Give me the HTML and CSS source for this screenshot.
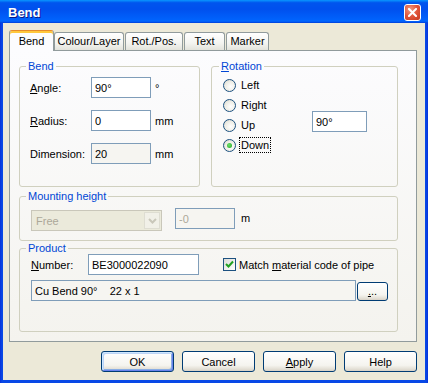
FILE: index.html
```html
<!DOCTYPE html>
<html lang="en">
<head>
    <meta charset="UTF-8">
    <title>Bend</title>
    <link rel="stylesheet" href="styles.css">
</head>
<body>
    <div class="window">
        <div class="titlebar">
            <span class="title">Bend</span>
            <span class="close-btn">
                <svg width="9" height="9" viewBox="0 0 9 9"><path d="M1 1 L8 8 M8 1 L1 8" stroke="#fff" stroke-width="2" stroke-linecap="square"/></svg>
            </span>
        </div>
        <div class="client">
            <div class="tabs">
                <span class="tab active tab-bend">Bend</span>
                <span class="tab tab-colour">Colour/Layer</span>
                <span class="tab tab-rot">Rot./Pos.</span>
                <span class="tab tab-text">Text</span>
                <span class="tab tab-marker">Marker</span>
            </div>
            <div class="panel">
                <div class="row-top">
                    <fieldset class="group group-bend">
                        <legend>Bend</legend>
                        <div class="field-grid">
                            <label><u>A</u>ngle:</label>
                            <input class="edit" type="text" value="90°">
                            <span class="unit">°</span>
                            <label><u>R</u>adius:</label>
                            <input class="edit" type="text" value="0">
                            <span class="unit">mm</span>
                            <label>Dimension:</label>
                            <input class="edit readonly" type="text" value="20" readonly>
                            <span class="unit">mm</span>
                        </div>
                    </fieldset>
                    <fieldset class="group group-rotation">
                        <legend><u>R</u>otation</legend>
                        <div class="rotation-body">
                            <div class="radio-list">
                                <div class="radio-row"><span class="radio"></span><span class="radio-text">Left</span></div>
                                <div class="radio-row"><span class="radio"></span><span class="radio-text">Right</span></div>
                                <div class="radio-row"><span class="radio"></span><span class="radio-text">Up</span></div>
                                <div class="radio-row"><span class="radio checked"></span><span class="radio-text focused">Down</span></div>
                            </div>
                            <input class="edit rotation-angle" type="text" value="90°">
                        </div>
                    </fieldset>
                </div>
                <fieldset class="group group-mount">
                    <legend>Mounting height</legend>
                    <div class="mount-row">
                        <div class="select disabled">
                            <span class="select-text">Free</span>
                            <span class="select-arrow">
                                <svg width="9" height="6" viewBox="0 0 9 6"><path d="M1 1 L4.5 4.5 L8 1" stroke="#C9C7BA" stroke-width="2" fill="none"/></svg>
                            </span>
                        </div>
                        <input class="edit readonly dim mount-value" type="text" value="-0" readonly>
                        <span class="mount-unit">m</span>
                    </div>
                </fieldset>
                <fieldset class="group group-product">
                    <legend>Product</legend>
                    <div class="product-row">
                        <label class="product-label"><u>N</u>umber:</label>
                        <input class="edit product-number" type="text" value="BE3000022090">
                        <span class="checkbox">
                            <svg width="9" height="9" viewBox="0 0 9 9"><path d="M1 4 L3.5 6.5 L8 1.5" stroke="#21A121" stroke-width="2" fill="none"/></svg>
                        </span>
                        <span class="check-text">Match <u>m</u>aterial code of pipe</span>
                    </div>
                    <div class="product-row second">
                        <input class="edit readonly product-desc" type="text" value="Cu Bend 90°    22 x 1" readonly>
                        <button class="xp-btn browse-btn"><u>.</u>..</button>
                    </div>
                </fieldset>
            </div>
            <div class="buttons">
                <button class="xp-btn default">OK</button>
                <button class="xp-btn">Cancel</button>
                <button class="xp-btn"><u>A</u>pply</button>
                <button class="xp-btn">Help</button>
            </div>
        </div>
    </div>
</body>
</html>
```

FILE: styles.css
```css
body {
    margin: 0;
    font-family: "Liberation Sans", Arial, sans-serif;
    font-size: 11px;
    color: #000;
}

.window {
    width: 428px;
    height: 383px;
    display: flex;
    flex-direction: column;
    background: linear-gradient(90deg, #0831D9, #0848E6 2px, #0848E6 calc(100% - 2px), #0831D9);
    box-sizing: border-box;
}

.titlebar {
    height: 23px;
    flex: none;
    display: flex;
    align-items: center;
    justify-content: space-between;
    padding: 2px 7px 0 8px;
    box-sizing: border-box;
    background: linear-gradient(#0997FF 0%, #0055EE 12%, #0050EE 40%, #0062FC 85%, #0066FF 92%, #003DD7 100%);
}

.title {
    color: #fff;
    font-weight: bold;
    font-size: 13px;
    text-shadow: 1px 1px #0A1883;
}

.close-btn {
    width: 15px;
    height: 15px;
    border: 1px solid #fff;
    border-radius: 3px;
    background: radial-gradient(circle at 35% 30%, #F29A7F, #E0553A 50%, #C63A1F);
    display: flex;
    align-items: center;
    justify-content: center;
}

.client {
    flex: 1;
    margin: 0 3px 3px;
    background: #ECE9D8;
    padding: 7px 8px 0 6px;
}

/* tabs */
.tabs {
    height: 20px;
    display: flex;
    align-items: flex-end;
}

.tab {
    height: 18px;
    box-sizing: border-box;
    border: 1px solid #919B9C;
    border-bottom: none;
    border-radius: 3px 3px 0 0;
    background: linear-gradient(#FFFFFF, #F4F4F0 60%, #E3E3DB);
    text-align: center;
    line-height: 17px;
}

.tab.active {
    height: 21px;
    margin-bottom: -1px;
    position: relative;
    z-index: 1;
    background: #FCFCFE;
    border-top-color: #E68B2C;
    box-shadow: inset 0 2px #FFC83C;
    padding-top: 2px;
    line-height: 16px;
}

.tab-bend { width: 45px; }
.tab-colour { width: 70px; }
.tab-rot { width: 58px; margin-left: 1px; }
.tab-text { width: 41px; margin-left: 1px; }
.tab-marker { width: 43px; margin-left: 1px; }

.panel {
    height: 292px;
    box-sizing: border-box;
    border: 1px solid #919B9C;
    background: linear-gradient(#FCFCFE, #F4F3EE);
    padding: 9px 18px 0 9px;
}

/* group boxes */
.row-top {
    display: flex;
    gap: 11px;
}

.group {
    margin: 0;
    min-width: 0;
    box-sizing: border-box;
    border: 1px solid #D0D0BF;
    border-radius: 3px;
    padding: 0;
}

.group legend {
    color: #0046D5;
    line-height: 13px;
    padding: 0 2px;
    margin-left: -4px;
}

.group-bend {
    width: 181px;
    height: 127px;
    padding: 4px 0 0 10px;
}

.group-rotation {
    width: 187px;
    height: 127px;
    padding: 2px 0 0 11px;
}

.group-mount {
    margin-top: 3px;
    height: 51px;
    padding: 5px 0 0 11px;
}

.group-mount legend,
.group-product legend {
    margin-left: -5px;
}

.group-product {
    margin-top: 1px;
    height: 90px;
    padding: 0 0 0 11px;
}

/* edits */
.edit {
    height: 21px;
    box-sizing: border-box;
    border: 1px solid #7F9DB9;
    padding: 0 3px;
    margin: 0;
    font: inherit;
    color: #000;
    background: #fff;
    outline: none;
}

.edit.readonly {
    background: #F6F5F1;
}

.edit.dim {
    color: #ACA899;
}

.field-grid {
    display: grid;
    grid-template-columns: 61px 60px auto;
    row-gap: 12px;
    align-items: center;
}

.field-grid .edit {
    width: 60px;
}

.unit {
    margin-left: 4px;
}

/* rotation */
.rotation-body {
    display: flex;
}

.radio-list {
    width: 89px;
}

.radio-row {
    height: 20px;
    display: flex;
    align-items: center;
}

.radio {
    width: 13px;
    height: 13px;
    box-sizing: border-box;
    border: 1px solid #1C5180;
    border-radius: 50%;
    background: radial-gradient(circle at 60% 60%, #FFFFFF, #EEEDE5 55%, #D1CFC4);
    display: flex;
    align-items: center;
    justify-content: center;
}

.radio.checked::after {
    content: "";
    width: 5px;
    height: 5px;
    border-radius: 50%;
    background: radial-gradient(circle at 40% 40%, #6CE26C, #21A121);
}

.radio-text {
    margin-left: 3px;
    line-height: 14px;
    padding: 0 1px;
    border: 1px solid transparent;
}

.radio-text.focused {
    border: 1px dotted #000;
}

.rotation-angle {
    width: 55px;
    margin-top: 36px;
}

/* mounting height */
.mount-row {
    display: flex;
    align-items: flex-start;
}

.select {
    width: 131px;
    height: 21px;
    margin-top: 2px;
    box-sizing: border-box;
    border: 1px solid #C9C7BA;
    background: #EBEADB;
    display: flex;
    align-items: center;
    padding: 1px;
}

.select-text {
    flex: 1;
    color: #ACA899;
    padding-left: 3px;
}

.select-arrow {
    width: 16px;
    height: 17px;
    box-sizing: border-box;
    border: 1px solid #DEDDD2;
    background: #F1F0E8;
    display: flex;
    align-items: center;
    justify-content: center;
}

.mount-value {
    width: 60px;
    margin-left: 13px;
}

.mount-unit {
    margin-left: 6px;
    line-height: 21px;
}

/* product */
.product-row {
    display: flex;
    align-items: center;
    margin-top: -1px;
}

.product-row.second {
    margin-top: 5px;
}

.product-label {
    width: 57px;
}

.product-number {
    width: 111px;
}

.checkbox {
    width: 13px;
    height: 13px;
    box-sizing: border-box;
    margin-left: 24px;
    border: 1px solid #1C5180;
    background: linear-gradient(135deg, #DCDCD7, #FFFFFF);
    display: flex;
    align-items: center;
    justify-content: center;
}

.check-text {
    margin-left: 3px;
}

.product-desc {
    width: 325px;
}

/* buttons */
.xp-btn {
    height: 21px;
    box-sizing: border-box;
    border: 1px solid #003C74;
    border-radius: 3px;
    background: linear-gradient(#FFFFFF, #F5F4EF 70%, #E3DFD5 90%, #D6D0C5);
    font: inherit;
    color: #000;
    padding: 0;
}

.browse-btn {
    width: 31px;
    height: 19px;
    margin-left: 1px;
    margin-top: 1px;
    line-height: 12px;
}

.buttons {
    display: flex;
    justify-content: flex-end;
    gap: 8px;
    margin-top: 9px;
}

.buttons .xp-btn {
    width: 73px;
}

.xp-btn.default {
    box-shadow: inset 1px 1px #CEE7FF, inset -1px -1px #6982EE, inset 2px 2px #BCD4F6, inset -2px -2px #89ADE4;
}
```
